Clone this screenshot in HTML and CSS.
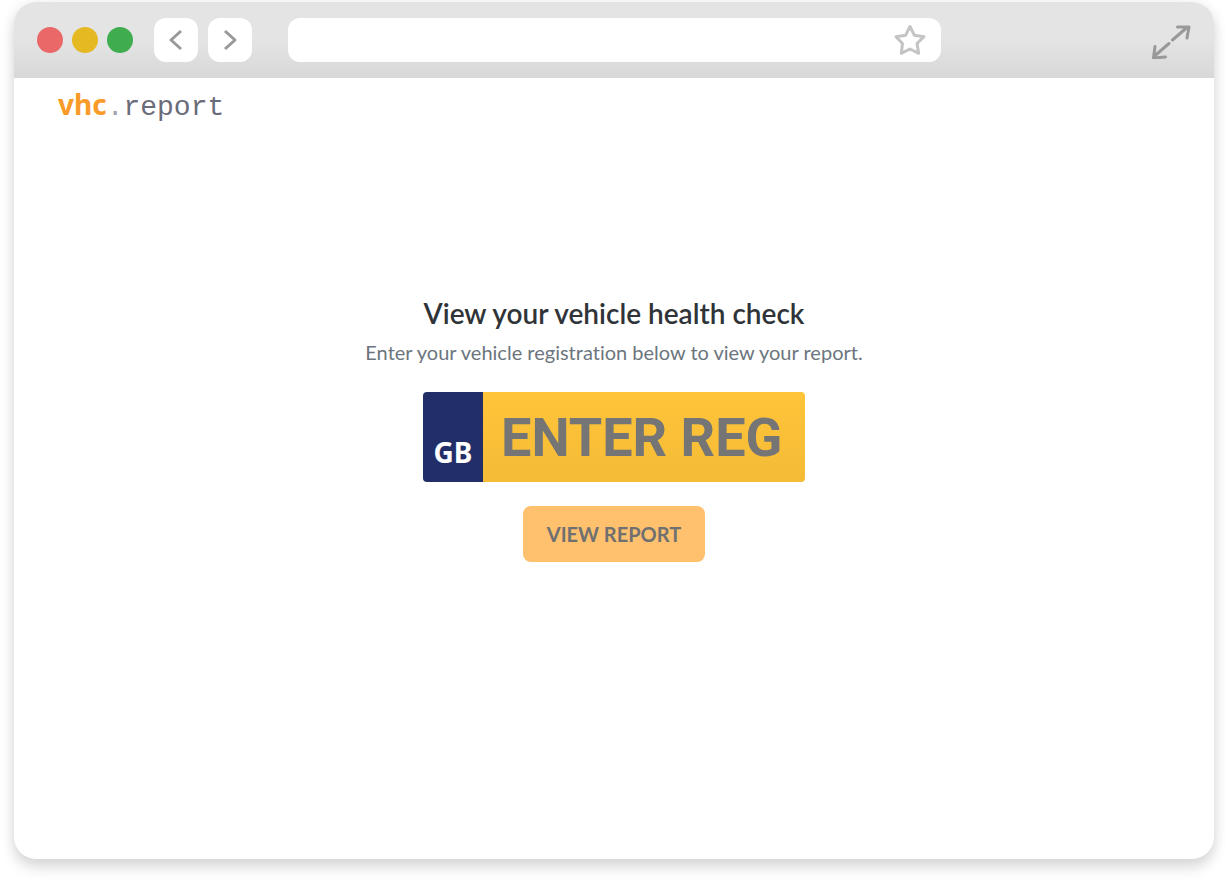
FILE: index.html
```html
<!DOCTYPE html>
<html lang="en">
<head>
<meta charset="utf-8">
<meta name="viewport" content="width=device-width, initial-scale=1">
<title>vhc.report</title>
<link rel="stylesheet" href="styles.css">
</head>
<body>
<div class="window">
  <header class="toolbar">
    <div class="lights">
      <span class="light light-red"></span>
      <span class="light light-yellow"></span>
      <span class="light light-green"></span>
    </div>
    <nav class="nav" aria-label="History">
      <button class="nav-button" type="button" aria-label="Back">
        <svg width="44" height="44" viewBox="0 0 44 44"><path d="M27 13L17 22l10 9"/></svg>
      </button>
      <button class="nav-button" type="button" aria-label="Forward">
        <svg width="44" height="44" viewBox="0 0 44 44"><path d="M17 13l10 9-10 9"/></svg>
      </button>
    </nav>
    <div class="address">
      <input class="address-input" type="text" aria-label="Address">
      <button class="icon-button" type="button" aria-label="Bookmark">
        <svg class="star" width="34" height="34" viewBox="0 0 34 34"><path d="M17 3.500l4.300 8.700 9.700 1.500-7 6.800 1.700 9.800-8.700-4.300-8.700 4.300 1.200-9.800-6.500-6.800 9.700-1.500z"/></svg>
      </button>
    </div>
    <button class="icon-button expand" type="button" aria-label="Full screen">
      <svg width="42" height="38" viewBox="0 0 42 38"><path d="M23.500 19L38.500 6M28.500 6h11.500l-2 11M20 22.500L5 35.500M6 25.500l-1.500 11.500 12-1"/></svg>
    </button>
  </header>
  <main class="page">
    <a class="logo" href="#"><span class="logo-name">vhc</span><span class="logo-dot">.</span><span class="logo-word">report</span></a>
    <form class="lookup">
      <h1 class="title">View your vehicle health check</h1>
      <label class="intro" for="reg">Enter your vehicle registration below to view your report.</label>
      <div class="plate">
        <span class="plate-country">GB</span>
        <input class="plate-input" id="reg" type="text" placeholder="ENTER REG">
      </div>
      <button class="submit" type="submit">VIEW REPORT</button>
    </form>
  </main>
</div>
</body>
</html>
```
FILE: styles.css
```css
* { box-sizing: border-box; }
body {
  margin: 0;
  background: #fff;
  font-family: Lato, "Liberation Sans", sans-serif;
  font-variant-ligatures: none;
}
.window {
  display: flex;
  flex-direction: column;
  min-height: calc(100vh - 28px);
  margin: 2px 14px 26px;
  border-radius: 22px;
  background: #fff;
  box-shadow: 0 10px 14px rgba(0, 0, 0, 0.1), 0 2px 14px rgba(0, 0, 0, 0.1);
  overflow: hidden;
}
.toolbar {
  display: flex;
  align-items: center;
  height: 76px;
  padding: 0 23px;
  background: linear-gradient(#e4e4e4 50%, #d8d8d8);
}
.lights { display: flex; gap: 9px; }
.light { width: 26px; height: 26px; border-radius: 50%; }
.light-red { background: #ea6868; }
.light-yellow { background: #e4b922; }
.light-green { background: #40ac50; }
.nav { display: flex; gap: 10px; margin-left: 21px; }
.nav-button {
  width: 44px;
  height: 44px;
  padding: 0;
  border: 0;
  border-radius: 12px;
  background: #fff;
}
svg { display: block; fill: none; stroke: #999; stroke-width: 3; stroke-linejoin: round; }
.address {
  display: flex;
  align-items: center;
  flex: 0 1 653px;
  min-width: 0;
  height: 44px;
  margin-left: 36px;
  padding: 0 14px;
  border-radius: 12px;
  background: #fff;
}
.address-input {
  flex: 1;
  min-width: 0;
  border: 0;
  background: none;
  font: 18px Lato, sans-serif;
}
.icon-button { padding: 0; border: 0; background: none; }
.star { stroke: #c4c4c4; }
.expand { margin-left: auto; }
.expand svg { stroke: #999; stroke-linecap: round; }
.page { flex: 1; padding: 6px 44px; }
.logo {
  display: inline-flex;
  align-items: baseline;
  font-size: 28px;
  line-height: 40px;
  text-decoration: none;
}
.logo-name { color: #f99b28; font-family: "Noto Sans", sans-serif; font-weight: 700; }
.logo-dot { color: #a5a5b0; font-family: "Liberation Mono", monospace; }
.logo-word { color: #6a6c79; font-family: "Liberation Mono", monospace; }
.lookup {
  display: flex;
  flex-direction: column;
  align-items: center;
  margin-top: 165px;
}
.title { margin: 0; color: #303438; font-size: 28px; font-weight: 600; line-height: 40px; }
.intro { margin-top: 3px; color: #6c757d; font-size: 20px; line-height: 32px; }
.plate {
  display: flex;
  width: 382px;
  max-width: 100%;
  height: 90px;
  margin-top: 24px;
  border-radius: 4px;
  overflow: hidden;
}
.plate-country {
  display: flex;
  align-items: flex-end;
  justify-content: center;
  width: 60px;
  padding-bottom: 12px;
  background: #222e68;
  color: #fff;
  font: 700 28px/36px "Noto Sans", sans-serif;
}
.plate-input {
  flex: 1;
  min-width: 0;
  padding: 0 18px;
  border: 0;
  background: linear-gradient(#ffc439, #f4bb36);
  color: #222;
  font: 700 54px Roboto, sans-serif;
}
.plate-input::placeholder { color: #757575; opacity: 1; }
.submit {
  margin-top: 24px;
  padding: 12px 24px;
  border: 0;
  border-radius: 8px;
  background: #ffc16e;
  color: #707070;
  font: 700 20px/32px Lato, sans-serif;
}
```
